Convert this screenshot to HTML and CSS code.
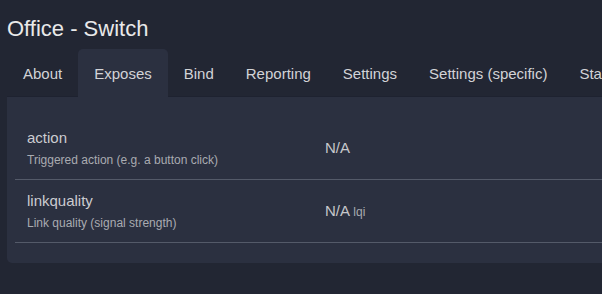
FILE: index.html
```html
<!DOCTYPE html>
<html lang="en">
<head>
    <meta charset="UTF-8">
    <meta name="viewport" content="width=device-width, initial-scale=1.0">
    <title>Office - Switch</title>
    <link rel="stylesheet" href="styles.css">
</head>
<body>
    <div class="page">
        <h1 class="device-title">Office - Switch</h1>

        <ul class="tabs">
            <li class="tab">About</li>
            <li class="tab active">Exposes</li>
            <li class="tab">Bind</li>
            <li class="tab">Reporting</li>
            <li class="tab">Settings</li>
            <li class="tab">Settings (specific)</li>
            <li class="tab">State</li>
        </ul>

        <div class="card">
            <div class="expose-row">
                <div class="expose-label">
                    <div class="expose-name">action</div>
                    <div class="expose-desc">Triggered action (e.g. a button click)</div>
                </div>
                <div class="expose-value">N/A</div>
            </div>
            <div class="expose-row">
                <div class="expose-label">
                    <div class="expose-name">linkquality</div>
                    <div class="expose-desc">Link quality (signal strength)</div>
                </div>
                <div class="expose-value">N/A <span class="unit">lqi</span></div>
            </div>
        </div>
    </div>
</body>
</html>
```

FILE: styles.css
```css
body {
    font-family: "Liberation Sans", Arial, sans-serif;
    background-color: #222633;
    margin: 0;
    overflow: hidden;
}
.page {
    padding: 16px 0 0 7px;
    width: 720px;
}
.device-title {
    margin: 0 0 7px 0;
    font-size: 22px;
    line-height: 26px;
    font-weight: normal;
    color: #e9e9ea;
}
.tabs {
    display: flex;
    list-style: none;
    margin: 0;
    padding: 0;
    border-bottom: 1px solid #1e2230;
    white-space: nowrap;
}
.tab {
    padding: 13px 16px 11px 16px;
    font-size: 15px;
    line-height: 23px;
    color: #d2d3d7;
    border-radius: 5px 5px 0 0;
}
.tab.active {
    background-color: #2b3040;
    margin-bottom: -1px;
    padding-bottom: 12px;
}
.card {
    background-color: #2b3040;
    padding: 20px 8px;
    border-radius: 0 0 5px 5px;
}
.expose-row {
    display: flex;
    align-items: center;
    border-bottom: 1px solid #545a69;
}
.expose-label {
    width: 298px;
    padding: 11px 0 10px 12px;
}
.expose-name {
    font-size: 15px;
    line-height: 20px;
    color: #cbccd0;
}
.expose-desc {
    margin-top: 3px;
    font-size: 12px;
    line-height: 18px;
    color: #a9abb1;
}
.expose-value {
    font-size: 15px;
    line-height: 20px;
    color: #c6c7cb;
}
.unit {
    font-size: 12px;
    color: #a9abb1;
}
```
